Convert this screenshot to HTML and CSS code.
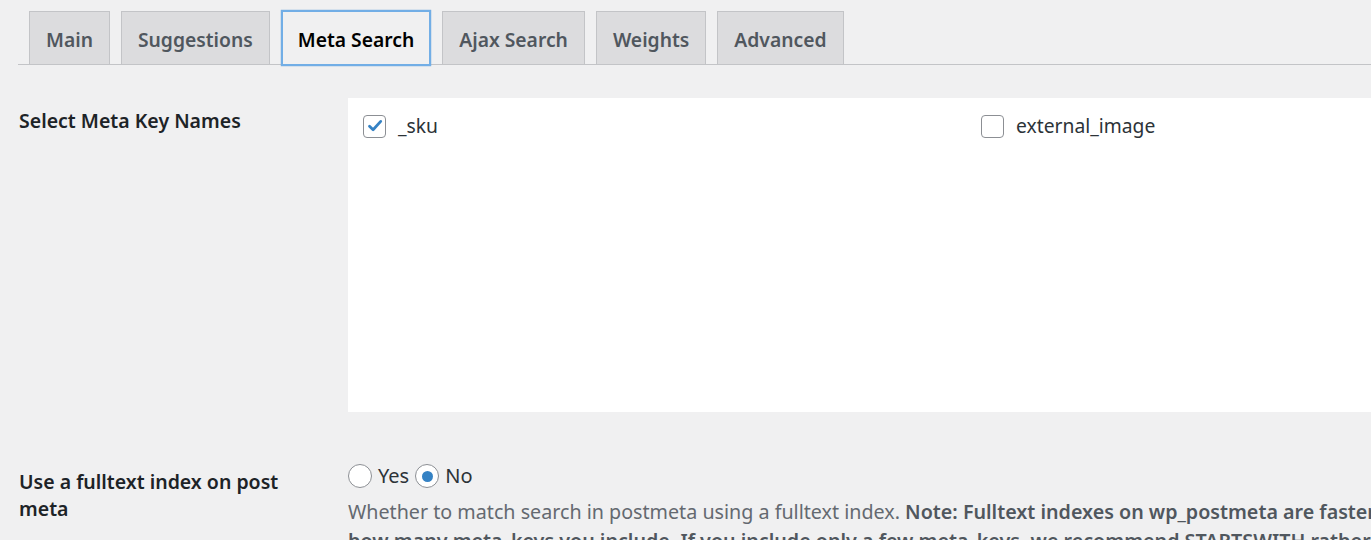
FILE: index.html
```html
<!DOCTYPE html>
<html lang="en">
<head>
    <meta charset="UTF-8">
    <title>Relevanssi - Meta Search</title>
    <link rel="stylesheet" href="styles.css">
</head>
<body>
    <div class="wrap">
        <nav class="nav-tabs">
            <a class="nav-tab">Main</a>
            <a class="nav-tab">Suggestions</a>
            <a class="nav-tab active">Meta Search</a>
            <a class="nav-tab">Ajax Search</a>
            <a class="nav-tab">Weights</a>
            <a class="nav-tab">Advanced</a>
        </nav>

        <div class="form-row">
            <div class="row-label">Select Meta Key Names</div>
            <div class="meta-box">
                <label class="meta-key">
                    <span class="check checked">
                        <svg viewBox="0 0 20 20" width="20" height="20"><path d="M4.5 10.2l3.6 3.6 7.6-8.4" fill="none" stroke="#3582c4" stroke-width="2.8" stroke-linecap="round" stroke-linejoin="round"/></svg>
                    </span>
                    _sku
                </label>
                <label class="meta-key">
                    <span class="check"></span>
                    external_image
                </label>
            </div>
        </div>

        <div class="form-row second">
            <div class="row-label">Use a fulltext index on post meta</div>
            <div class="row-field">
                <div class="radios">
                    <label class="radio-opt"><span class="radio"></span>Yes</label>
                    <label class="radio-opt"><span class="radio checked"></span>No</label>
                </div>
                <p class="description">Whether to match search in postmeta using a fulltext index. <strong>Note: Fulltext indexes on wp_postmeta are faster</strong><br><strong>how many meta_keys you include. If you include only a few meta_keys, we recommend STARTSWITH rather</strong></p>
            </div>
        </div>
    </div>
</body>
</html>
```

FILE: styles.css
```css
html, body {
    margin: 0;
    padding: 0;
    overflow: hidden;
}
body {
    background: #f0f0f1;
    font-family: "Noto Sans", "Open Sans", Arial, sans-serif;
    font-size: 19.5px;
    line-height: 28px;
    color: #1d2327;
}
.wrap {
    width: 1600px;
    padding: 11px 0 0 18px;
}
.nav-tabs {
    display: flex;
    gap: 11px;
    padding-left: 11px;
    border-bottom: 1px solid #c3c4c7;
    height: 53px;
}
.nav-tab {
    display: flex;
    align-items: center;
    padding: 3px 16px 0;
    height: 49px;
    background: #dcdcde;
    border: 1px solid #c3c4c7;
    border-bottom: none;
    color: #50575e;
    font-weight: 600;
    font-size: 19.3px;
}
.nav-tab.active {
    background: #f0f0f1;
    color: #000;
    border: 2px solid #72aee6;
    height: 49px;
    padding: 3px 15px 0;
    margin-top: -1px;
    box-shadow: 0 0 1px #4f94d4;
}
.form-row {
    display: grid;
    grid-template-columns: 330px 1fr;
    margin-top: 33px;
}
.row-label {
    font-weight: 600;
    padding-top: 9px;
    width: 300px;
    margin-left: 1px;
}
.meta-box {
    background: #fff;
    height: 314px;
    display: grid;
    grid-template-columns: 618px 1fr;
    align-content: start;
    padding: 14px 0 0 15px;
    box-sizing: border-box;
}
.meta-key {
    display: flex;
    align-items: center;
    gap: 12px;
    color: #2c3338;
    font-size: 19.3px;
}
.check {
    width: 21px;
    height: 21px;
    border: 1px solid #8c8f94;
    border-radius: 4px;
    background: #fff;
    display: flex;
    align-items: center;
    justify-content: center;
}
.form-row.second {
    margin-top: 50px;
}
.second .row-label {
    padding-top: 0;
    margin-top: 6px;
    line-height: 27px;
}
.radios {
    display: flex;
    align-items: center;
    gap: 6px;
    color: #2c3338;
    font-size: 20px;
}
.radio-opt {
    display: flex;
    align-items: center;
    gap: 6px;
}
.radio {
    width: 22px;
    height: 22px;
    border: 1px solid #8c8f94;
    border-radius: 50%;
    background: #fff;
    display: flex;
    align-items: center;
    justify-content: center;
}
.radio.checked::after {
    content: "";
    width: 11px;
    height: 11px;
    border-radius: 50%;
    background: #3582c4;
}
.description {
    margin: 7px 0 0;
    color: #646970;
    font-size: 19.7px;
    line-height: 29px;
    white-space: nowrap;
}
.description strong {
    color: #50575e;
    font-weight: 600;
}
```
